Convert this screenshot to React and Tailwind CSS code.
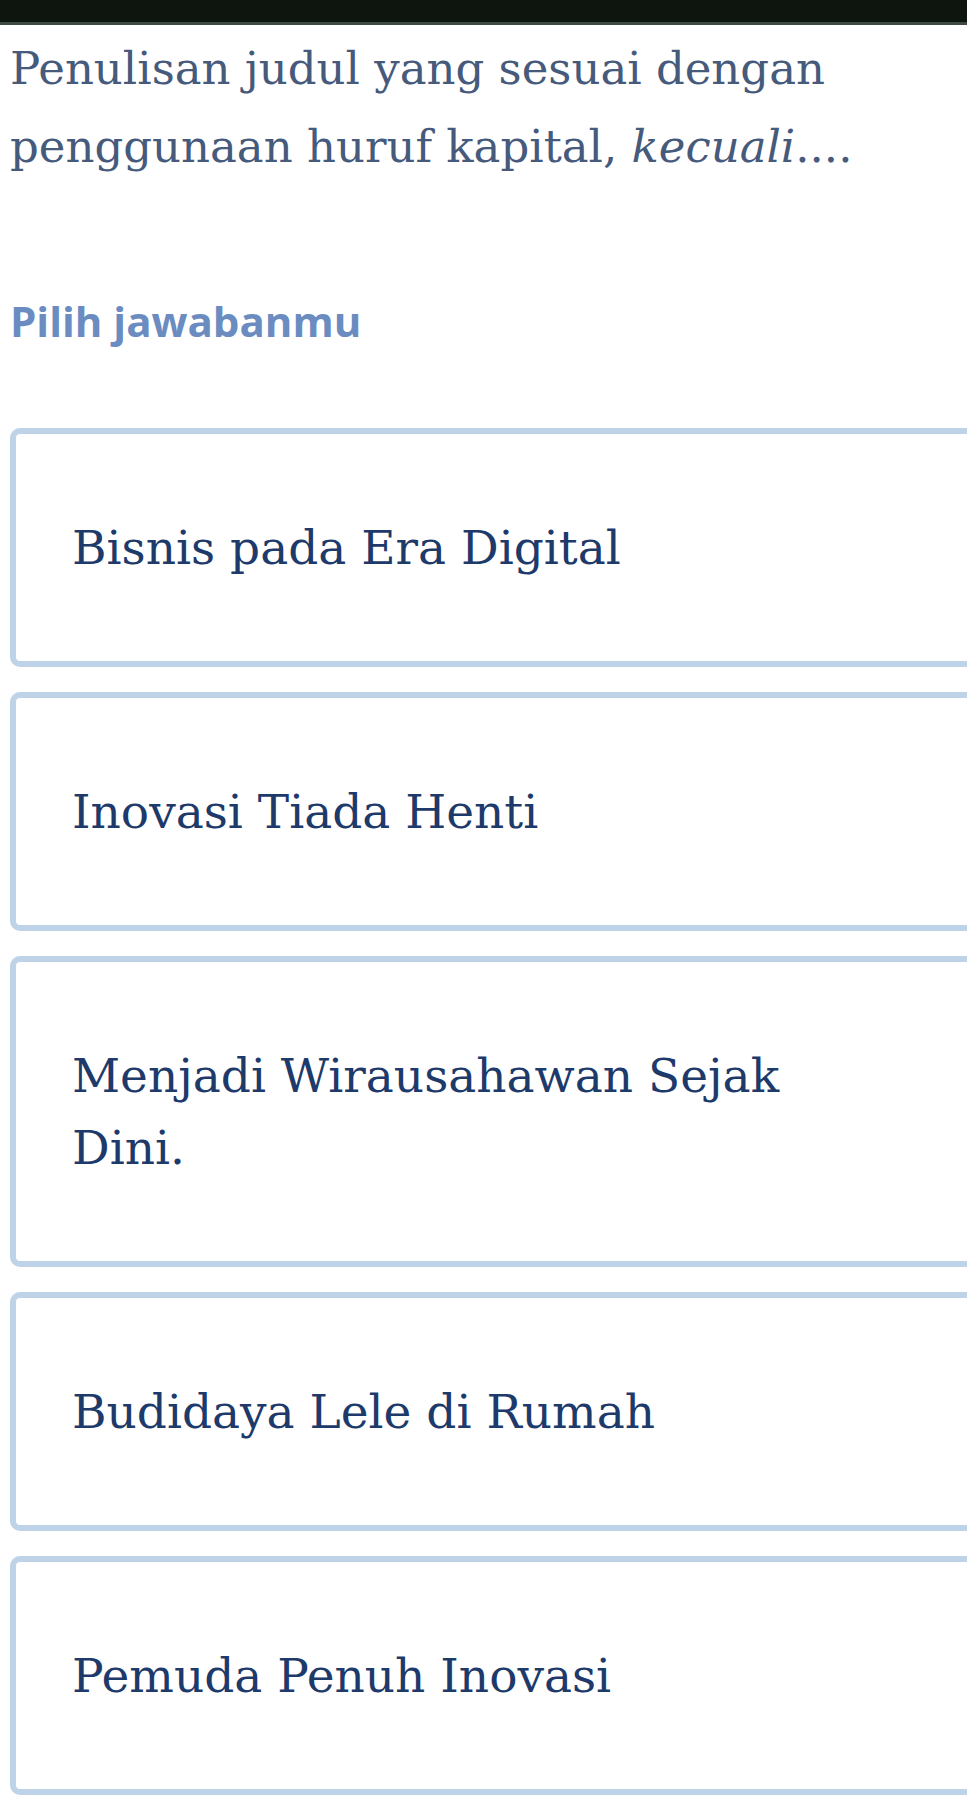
const OPTIONS = [
  'Bisnis pada Era Digital',
  'Inovasi Tiada Henti',
  'Menjadi Wirausahawan Sejak Dini.',
  'Budidaya Lele di Rumah',
  'Pemuda Penuh Inovasi',
];

const serif = { fontFamily: '"DejaVu Serif", "Liberation Serif", serif' };

export default function App() {
  return (
    <div className="w-full min-h-screen overflow-hidden bg-white">
      {/* status strip */}
      <div className="h-[25px] bg-[#0e140e] border-b-[3px] border-[#3e4a40]" />

      <div className="pl-[10px] pt-[5px]">
        <p
          className="text-[45px] leading-[78px] text-[#465a7c] w-[900px]"
          style={serif}
        >
          Penulisan judul yang sesuai dengan penggunaan huruf kapital, <em>kecuali</em>....
        </p>

        <p
          className="mt-[106px] text-[42px] leading-[58px] font-bold text-[#6a8cc0]"
          style={{ fontFamily: '"Open Sans", sans-serif' }}
        >
          Pilih jawabanmu
        </p>

        <div className="mt-[78px] flex flex-col gap-[25px] w-[1000px]">
          {OPTIONS.map(opt => (
            <div
              key={opt}
              className="border-[6px] border-[#bed2e8] rounded-[10px] pl-[56px] pt-[78px] pb-[77px]"
            >
              <p className="max-w-[780px] text-[47px] leading-[72px] text-[#1d3a6b]" style={serif}>
                {opt}
              </p>
            </div>
          ))}
        </div>
      </div>
    </div>
  );
}
